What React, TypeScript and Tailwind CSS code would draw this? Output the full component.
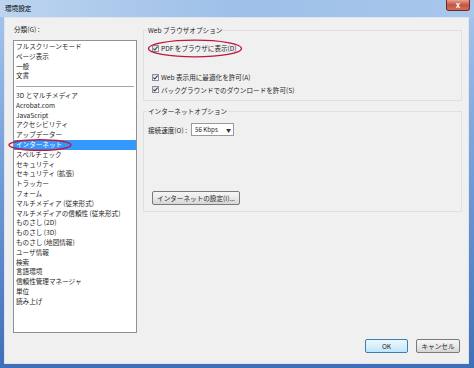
import React from 'react';

const categories: (string | null)[] = [
  'フルスクリーンモード',
  'ページ表示',
  '一般',
  '文書',
  null,
  '3D とマルチメディア',
  'Acrobat.com',
  'JavaScript',
  'アクセシビリティ',
  'アップデーター',
  'インターネット',
  'スペルチェック',
  'セキュリティ',
  'セキュリティ (拡張)',
  'トラッカー',
  'フォーム',
  'マルチメディア (従来形式)',
  'マルチメディアの信頼性 (従来形式)',
  'ものさし (2D)',
  'ものさし (3D)',
  'ものさし (地図情報)',
  'ユーザ情報',
  '検索',
  '言語環境',
  '信頼性管理マネージャ',
  '単位',
  '読み上げ',
];

const Check = () => (
  <span className="w-[7px] h-[7px] shrink-0 border border-[#8e8f8f] bg-gradient-to-br from-[#d8d8d8] to-white flex items-center justify-center">
    <svg viewBox="0 0 5 5" className="w-[5px] h-[5px]">
      <path d="M0.4 2.6 L1.8 4 L4.6 0.6" fill="none" stroke="#24406f" strokeWidth="1.1" />
    </svg>
  </span>
);

// red hand-drawn style ring used to mark items in the screenshot
const Ring = ({ className }: { className: string }) => (
  <svg className={`absolute pointer-events-none ${className}`} viewBox="0 0 100 20" preserveAspectRatio="none">
    <ellipse cx="50" cy="10" rx="48.5" ry="8.8" fill="none" stroke="#c2173c" strokeWidth="1.4" vectorEffect="non-scaling-stroke" />
  </svg>
);

export default function App() {
  return (
    <div className="w-[474px] h-[368px] flex flex-col bg-gradient-to-b from-[#a8c7ec] via-[#6f9ad6] to-[#3f6fb8] font-['Noto_Sans_CJK_JP','Noto_Sans',sans-serif] text-[6.6px] text-[#262626] overflow-hidden">
      {/* title bar */}
      <div className="h-[17px] shrink-0 flex items-start bg-gradient-to-r from-[#bcd4ef] via-[#9dbfe8] to-[#a9c7ec]">
        <span className="ml-[5px] mt-[3px] leading-[10px] text-black">環境設定</span>
        <div className="ml-auto mr-[4px] w-[24px] h-[11px] rounded-b-[3px] border border-t-0 border-[#6d2a2a] bg-gradient-to-b from-[#e4a192] via-[#c7523e] to-[#d0705c] flex items-center justify-center">
          <span className="text-white text-[8px] leading-[8px] font-bold">x</span>
        </div>
      </div>

      {/* client area */}
      <div className="flex-1 ml-[4px] mr-[5px] mb-[4px] bg-[#f0f0f0] border border-[#dde6f0] flex flex-col">
        <div className="flex pt-[6px] pl-[8px]">
          {/* left: categories */}
          <div className="w-[124px] flex flex-col">
            <div className="h-[10px] leading-[10px] pl-[1px]">分類(G) :</div>
            <div className="mt-[6px] h-[293px] border border-[#8d9199] bg-white pt-[1px] leading-[9.8px]">
              {categories.map((c, i) =>
                c === null ? (
                  <div key={i} className="h-[9.8px] flex items-center px-[2px]">
                    <div className="h-px w-full bg-[#a6a6a6]" />
                  </div>
                ) : c === 'インターネット' ? (
                  <div key={i} className="relative h-[9.8px] px-[2px] bg-[#3399ff] text-white whitespace-nowrap">
                    {c}
                    <Ring className="left-[-6px] top-[-1px] w-[64px] h-[12px]" />
                  </div>
                ) : (
                  <div key={i} className="h-[9.8px] px-[2px] whitespace-nowrap">
                    {c}
                  </div>
                )
              )}
            </div>
          </div>

          {/* right: options */}
          <div className="ml-[6px] w-[319px] flex flex-col mt-[1px]">
            <fieldset className="border border-[#e0e0e0] h-[76px]">
              <legend className="ml-[3px] px-[1px] leading-[10px]">Web ブラウザオプション</legend>
              <div className="pl-[8px] flex flex-col leading-[10px]">
                <div className="relative mt-[8px] flex items-center gap-[2px]">
                  <Check />
                  <span>PDF をブラウザに表示(D)</span>
                  <Ring className="left-[-5px] top-[-4px] w-[96px] h-[19px]" />
                </div>
                <div className="mt-[19px] flex items-center gap-[2px]">
                  <Check />
                  <span>Web 表示用に最適化を許可(A)</span>
                </div>
                <div className="mt-[2.5px] flex items-center gap-[2px]">
                  <Check />
                  <span>バックグラウンドでのダウンロードを許可(S)</span>
                </div>
              </div>
            </fieldset>

            <fieldset className="mt-[5px] border border-[#e0e0e0] h-[106px]">
              <legend className="ml-[3px] px-[1px] leading-[10px]">インターネットオプション</legend>
              <div className="pl-[4px] flex flex-col">
                <div className="mt-[7px] flex items-center">
                  <span className="leading-[10px]">接続速度(O) :</span>
                  <div className="ml-[4px] w-[43px] h-[13px] border border-[#9a9a9a] bg-white flex items-center">
                    <span className="pl-[3px] text-[6.2px] leading-[10px]">56 Kbps</span>
                    <span className="ml-auto mr-[2px] text-[5px] leading-[5px] text-[#333]">▼</span>
                  </div>
                </div>
                <div className="mt-[55px] ml-[4px] w-[88px] h-[14px] border border-[#7a7a7a] rounded-[2px] bg-gradient-to-b from-[#f6f6f6] via-[#e9e9e9] to-[#d6d6d6] flex items-center justify-center leading-[10px]">
                  インターネットの設定(I)...
                </div>
              </div>
            </fieldset>
          </div>
        </div>

        {/* bottom buttons */}
        <div className="mt-auto mb-[10px] mr-[8px] flex justify-end gap-[8px]">
          <div className="w-[43px] h-[14px] border border-[#3c7fb1] rounded-[2px] bg-gradient-to-b from-[#eaf6fd] via-[#d9f0fc] to-[#bee6fd] flex items-center justify-center leading-[10px]">
            OK
          </div>
          <div className="w-[44px] h-[14px] border border-[#7a7a7a] rounded-[2px] bg-gradient-to-b from-[#f6f6f6] via-[#e9e9e9] to-[#d6d6d6] flex items-center justify-center leading-[10px]">
            キャンセル
          </div>
        </div>
      </div>
    </div>
  );
}
